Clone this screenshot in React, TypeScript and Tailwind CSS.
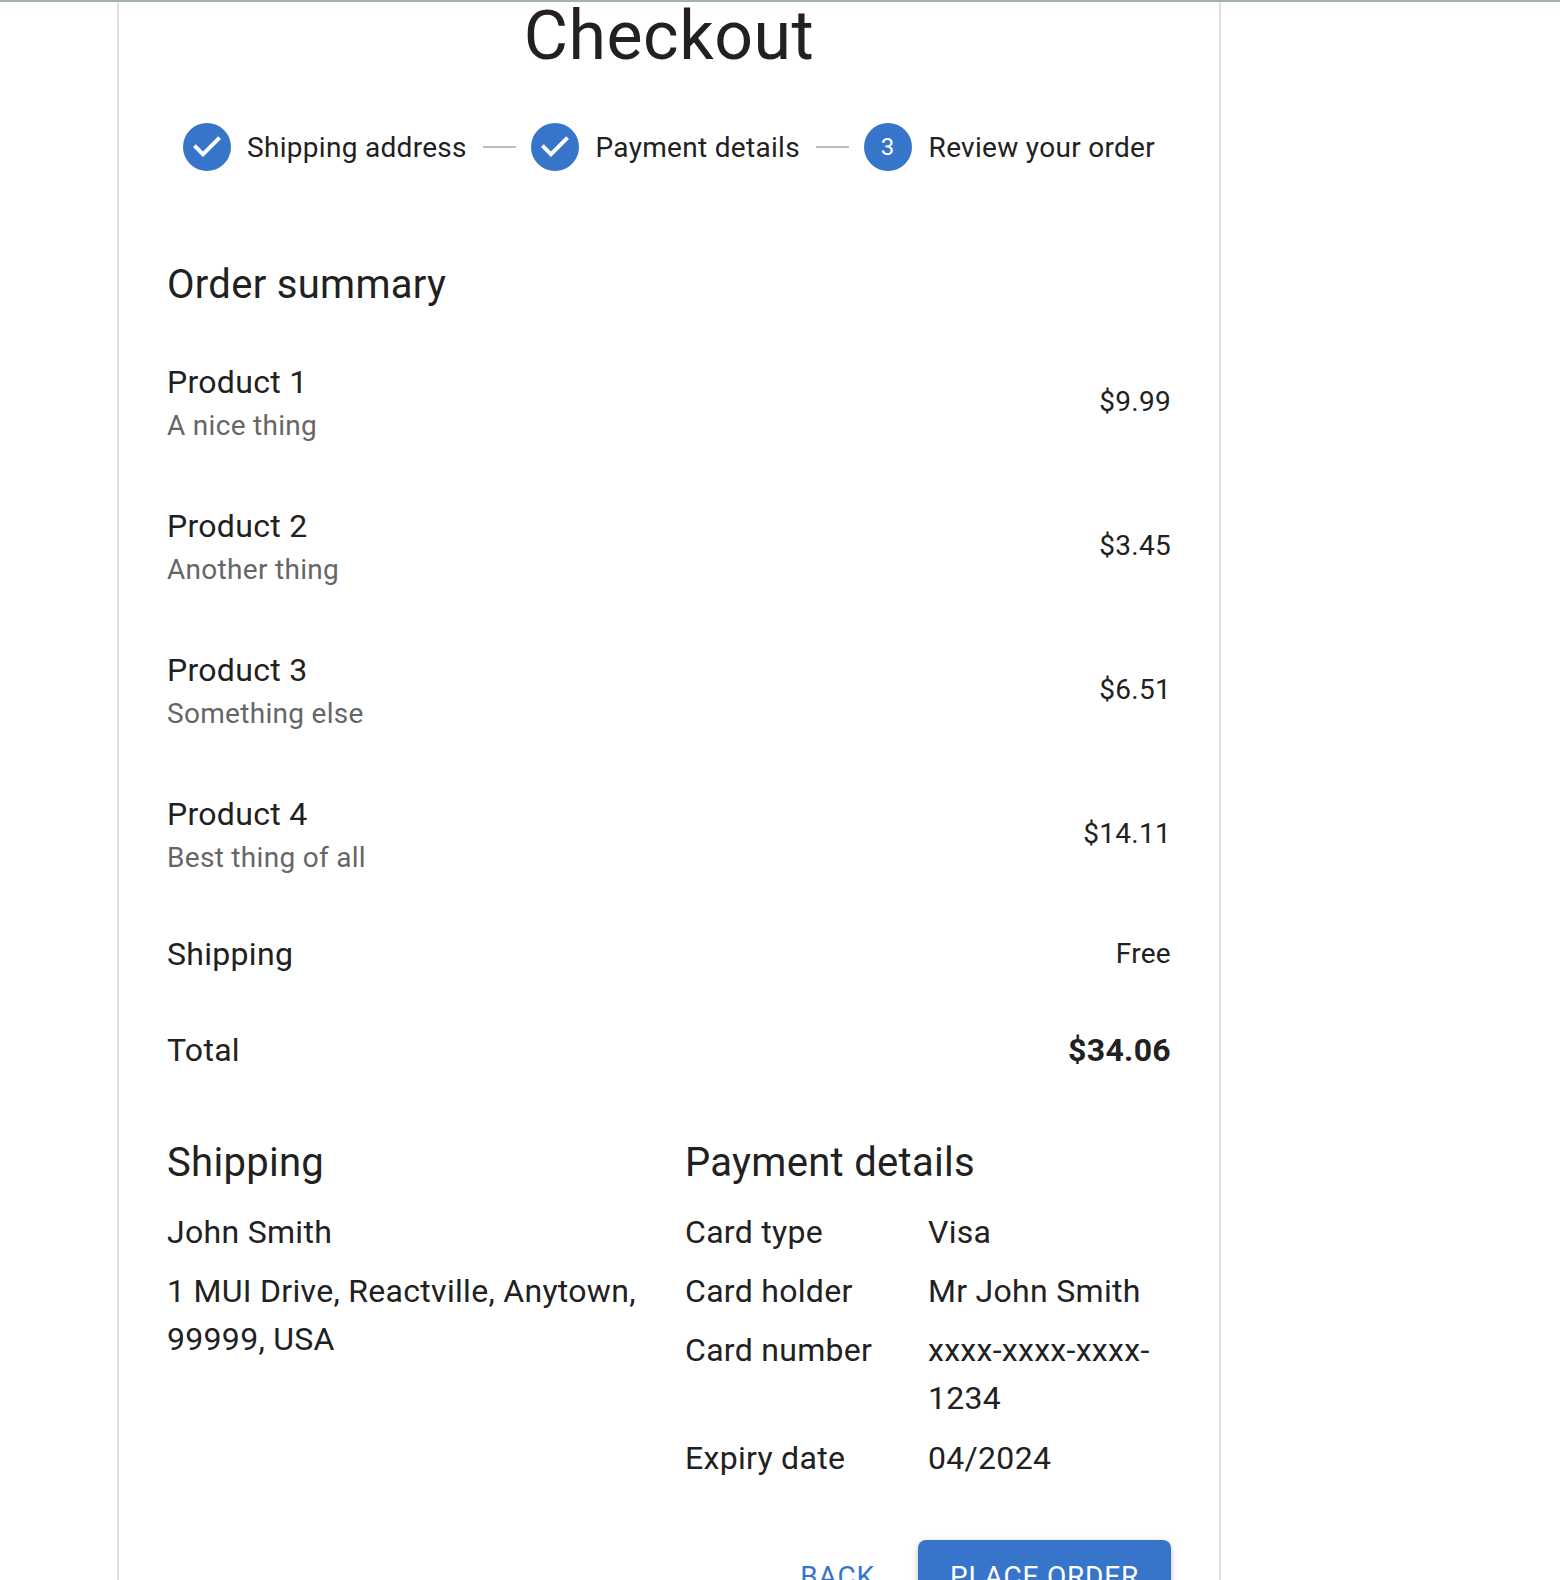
const STEPS = ["Shipping address", "Payment details", "Review your order"];

const PRODUCTS = [
  { name: "Product 1", desc: "A nice thing", price: "$9.99" },
  { name: "Product 2", desc: "Another thing", price: "$3.45" },
  { name: "Product 3", desc: "Something else", price: "$6.51" },
  { name: "Product 4", desc: "Best thing of all", price: "$14.11" },
];

const PAYMENTS = [
  { name: "Card type", detail: "Visa" },
  { name: "Card holder", detail: "Mr John Smith" },
  { name: "Card number", detail: "xxxx-xxxx-xxxx-1234" },
  { name: "Expiry date", detail: "04/2024" },
];

function CheckCircle() {
  return (
    <svg viewBox="0 0 24 24" className="size-12 fill-[#3775ca]">
      <path d="M12 0a12 12 0 1 0 0 24 12 12 0 0 0 0-24zm-2 17l-5-5 1.4-1.4 3.6 3.6 7.6-7.6L19 8l-9 9z" />
    </svg>
  );
}

function StepIcon({ index }: { index: number }) {
  if (index < 2) return <CheckCircle />;
  return (
    <div className="flex size-12 items-center justify-center rounded-full bg-[#3775ca] text-[24px] leading-none tracking-[0.3px] text-white">
      {index + 1}
    </div>
  );
}

export default function App() {
  return (
    <div className="h-[1580px] overflow-hidden bg-white font-['Roboto',sans-serif] tracking-[0.3px] text-[#212121]">
      <div className="relative z-10 h-[2px] bg-[#a3b5a3]" />
      <div className="ml-[117px] w-[1104px] border-x-2 border-[#e0e0e0] px-12">
        <h1 className="-mt-[8px] text-center text-[68px] leading-[84px] font-normal tracking-[0.5px]">Checkout</h1>

        <div className="flex items-center pt-[45px] pb-20">
          {STEPS.map((step, i) => (
            <div key={step} className="contents">
              {i > 0 && <div className="h-[2px] flex-1 bg-[#bdbdbd]" />}
              <div className="flex items-center px-4">
                <div className={i > 0 ? "-ml-[1px] pr-[17px]" : "pr-4"}>
                  <StepIcon index={i} />
                </div>
                <span className="pt-[2px] text-[28px] leading-10 whitespace-nowrap">{step}</span>
              </div>
            </div>
          ))}
        </div>

        <h2 className="mb-[13px] pt-[2px] text-[40px] leading-16 font-normal">Order summary</h2>

        <ul>
          {PRODUCTS.map((p) => (
            <li key={p.name} className="flex items-center justify-between py-4">
              <div className="my-3">
                <div className="text-[32px] leading-12">{p.name}</div>
                <div className="text-[28px] leading-10 text-[#666666]">{p.desc}</div>
              </div>
              <span className="text-[28px] leading-10">{p.price}</span>
            </li>
          ))}
          <li className="flex items-center justify-between py-4">
            <div className="my-2 text-[32px] leading-12">Shipping</div>
            <span className="text-[28px] leading-10">Free</span>
          </li>
          <li className="flex items-center justify-between py-4">
            <div className="my-2 text-[32px] leading-12">Total</div>
            <span className="text-[32px] leading-12 font-bold">$34.06</span>
          </li>
        </ul>

        <div className="mt-8 grid grid-cols-2 gap-x-8">
          <div>
            <h2 className="mb-[13px] pt-[1px] text-[40px] leading-16 font-normal">Shipping</h2>
            <p className="mb-[11.2px] text-[32px] leading-12">John Smith</p>
            <p className="mb-[11.2px] text-[32px] leading-12">1 MUI Drive, Reactville, Anytown, 99999, USA</p>
          </div>
          <div>
            <h2 className="mb-[13px] pt-[1px] text-[40px] leading-16 font-normal">Payment details</h2>
            <div className="grid grid-cols-2">
              {PAYMENTS.map((p) => (
                <div key={p.name} className="contents">
                  <p className="mb-[11.2px] text-[32px] leading-12">{p.name}</p>
                  <p className="mb-[11.2px] text-[32px] leading-12">{p.detail}</p>
                </div>
              ))}
            </div>
          </div>
        </div>

        <div className="flex justify-end">
          <button className="mt-[47px] mr-[11px] ml-4 rounded-lg px-4 py-3 text-[28px] leading-[49px] font-normal tracking-[0.8px] text-[#3775ca] uppercase">
            Back
          </button>
          <button className="mt-[47px] ml-4 rounded-lg bg-[#3775ca] px-8 py-3 text-[28px] leading-[49px] font-normal tracking-[0.8px] text-white uppercase shadow-[0_6px_2px_-4px_rgba(0,0,0,0.2),0_4px_4px_0_rgba(0,0,0,0.14),0_2px_10px_0_rgba(0,0,0,0.12)]">
            Place order
          </button>
        </div>
      </div>
    </div>
  );
}
